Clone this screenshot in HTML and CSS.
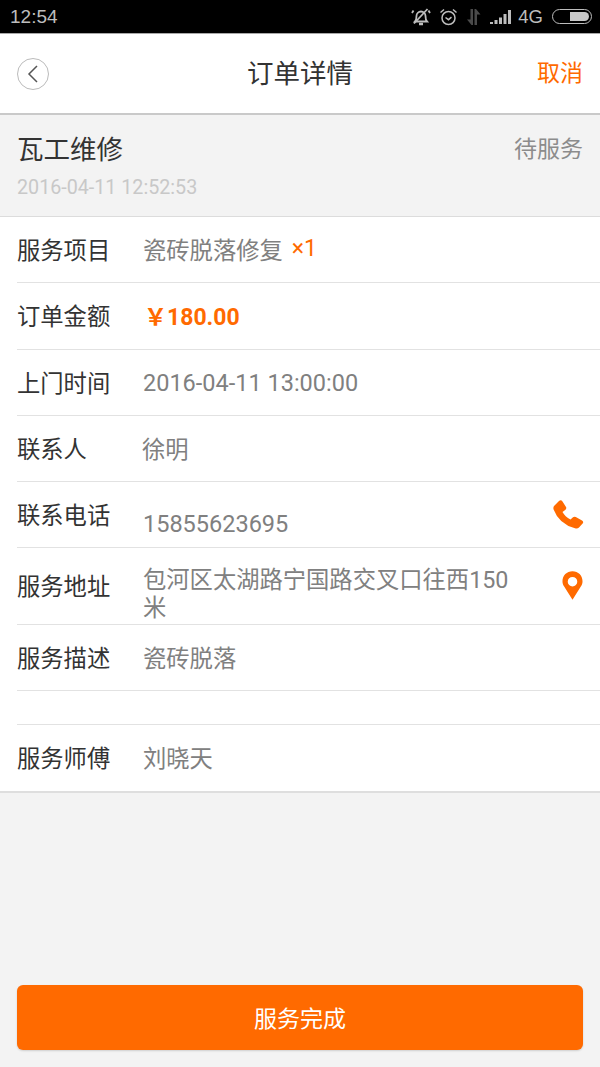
FILE: index.html
```html
<!DOCTYPE html>
<html lang="zh-CN">
<head>
    <meta charset="UTF-8">
    <meta name="viewport" content="width=device-width, initial-scale=1.0">
    <title>订单详情</title>
    <link rel="stylesheet" href="styles.css">
</head>
<body>
    <div class="status-bar">
        <span class="clock">12:54</span>
        <div class="status-icons">
            <svg class="icon-mute" width="20" height="20" viewBox="0 0 20 20" fill="none" stroke="#bdbdbd" stroke-width="1.8">
                <path d="M4 14.500c1.500-1.500 1.500-3 1.500-5.500a4.500 4.500 0 0 1 9 0c0 2.500 0 4 1.500 5.500z"/>
                <path d="M8 17h4" stroke-width="2.500"/>
                <path d="M16.500 2L3 16.500"/>
                <path d="M1 6l1.500-2.500M19 6l-1.500-2.500"/>
            </svg>
            <svg class="icon-alarm" width="19" height="20" viewBox="0 0 19 20" fill="none" stroke="#bdbdbd" stroke-width="1.500">
                <circle cx="9.500" cy="11" r="6.500"/>
                <path d="M6.500 10.500l3 2.200 3-2.500"/>
                <path d="M1.500 5.500l3.500-3M17.500 5.500L14 2.500"/>
            </svg>
            <svg class="icon-data" width="15" height="16" viewBox="0 0 15 16" fill="#4a4a4a">
                <path d="M4.500 0h2.500v16H5.500L1 10.500h3.500z"/>
                <path d="M8.500 0h1.500L14.500 5.500H11V16H8.500z"/>
            </svg>
            <svg class="icon-signal" width="21" height="14" viewBox="0 0 21 14" fill="#bdbdbd">
                <path d="M0 12h3v2H0zM4.500 10h3v4h-3zM9 7.500h3V14H9zM13.500 4h3v10h-3zM18 0h3v14h-3z"/>
            </svg>
            <span class="network">4G</span>
            <div class="battery"><div class="battery-level"></div></div>
        </div>
    </div>

    <header class="top-bar">
        <div class="back-btn">
            <svg width="12" height="18" viewBox="0 0 12 18" fill="none" stroke="#555" stroke-width="1.500">
                <path d="M10 1L2 9l8 8"/>
            </svg>
        </div>
        <h1>订单详情</h1>
        <a class="cancel">取消</a>
    </header>

    <section class="summary">
        <div class="summary-main">
            <h2>瓦工维修</h2>
            <p class="created">2016-04-11 12:52:53</p>
        </div>
        <span class="state">待服务</span>
    </section>

    <section class="details">
        <div class="row">
            <span class="label">服务项目</span>
            <span class="value">瓷砖脱落修复</span>
            <span class="qty">×1</span>
        </div>
        <div class="row row-tall">
            <span class="label">订单金额</span>
            <span class="price">￥180.00</span>
        </div>
        <div class="row">
            <span class="label">上门时间</span>
            <span class="value digits">2016-04-11 13:00:00</span>
        </div>
        <div class="row">
            <span class="label">联系人</span>
            <span class="value contact">徐明</span>
        </div>
        <div class="row row-phone">
            <span class="label">联系电话</span>
            <span class="value digits">15855623695</span>
            <svg class="row-icon" width="31" height="29" viewBox="0 0 31 29" fill="#ff6a00">
                <path d="M1 6L6 1Q8-.5 9.500 1.500L13 7Q13.800 8.500 12.500 9.800L9.500 12Q12 16.500 17.500 19.500L20 17.200Q21.300 16.200 22.800 17L29 20.500Q31 21.800 29.600 23.600L26 27.500Q24.500 29 22 28.300 6 24 .6 9.500 0 7.500 1 6z"/>
            </svg>
        </div>
        <div class="row row-address">
            <span class="label">服务地址</span>
            <span class="value address">包河区太湖路宁国路交叉口往西150米</span>
            <svg class="row-icon pin" width="21" height="29" viewBox="0 0 22 30" fill="#ff6a00">
                <path fill-rule="evenodd" d="M11 0C5 0 .5 4.500.5 10.500c0 2 .6 3.700 1.600 5.300L11 30l8.900-14.200c1-1.600 1.600-3.300 1.600-5.300C21.500 4.500 17 0 11 0zm0 6a5 5 0 1 1 0 10 5 5 0 0 1 0-10z"/>
            </svg>
        </div>
        <div class="row">
            <span class="label">服务描述</span>
            <span class="value">瓷砖脱落</span>
        </div>
        <div class="row row-empty"></div>
        <div class="row">
            <span class="label">服务师傅</span>
            <span class="value">刘晓天</span>
        </div>
    </section>

    <div class="footer">
        <button type="button">服务完成</button>
    </div>
</body>
</html>
```

FILE: styles.css
```css
* {
    box-sizing: border-box;
}
html, body {
    height: 100%;
}
body {
    margin: 0;
    font-family: Roboto, "Noto Sans CJK SC", sans-serif;
    background-color: #f3f3f3;
    display: flex;
    flex-direction: column;
    overflow: hidden;
}
.status-bar {
    height: 34px;
    flex: none;
    background: #000;
    border-bottom: 1px solid #a8a8a8;
    color: #bdbdbd;
    display: flex;
    justify-content: space-between;
    align-items: center;
    padding: 0 8px 0 10px;
}
.clock {
    font-family: "Liberation Sans", sans-serif;
    font-size: 19px;
}
.status-icons {
    display: flex;
    align-items: center;
}
.icon-mute {
    margin-right: 8px;
}
.icon-alarm {
    margin-right: 8px;
}
.icon-data {
    margin-right: 9px;
}
.network {
    font-family: "Liberation Sans", sans-serif;
    font-size: 18.5px;
    margin: 0 9px 0 7px;
}
.battery {
    width: 40px;
    height: 15px;
    border: 1px solid #bdbdbd;
    border-radius: 8px;
    padding: 2px;
    display: flex;
    justify-content: flex-end;
}
.battery-level {
    width: 19px;
    background: #c8c8c8;
    border-radius: 0 5px 5px 0;
}
.top-bar {
    height: 81px;
    flex: none;
    background: #fff;
    border-bottom: 2px solid #c9c9c9;
    display: grid;
    grid-template-columns: 1fr auto 1fr;
    align-items: center;
    padding: 0 17px;
}
.back-btn {
    width: 32px;
    height: 32px;
    border: 1px solid #bbb;
    border-radius: 50%;
    display: flex;
    align-items: center;
    justify-content: center;
}
.top-bar h1 {
    margin: 0 0 5px;
    font-size: 26.5px;
    font-weight: normal;
    color: #333;
}
.cancel {
    justify-self: end;
    font-size: 23px;
    margin-bottom: 5px;
    color: #ff6a00;
}
.summary {
    height: 102px;
    flex: none;
    border-bottom: 1px solid #dcdcdc;
    display: flex;
    justify-content: space-between;
    padding: 17px 17px 0;
}
.summary h2 {
    margin: 0;
    font-size: 26.5px;
    line-height: 36px;
    font-weight: normal;
    color: #333;
}
.created {
    margin: 9px 0 0;
    font-size: 19.7px;
    line-height: 22px;
    color: #c8c8c8;
}
.state {
    font-size: 23px;
    line-height: 36px;
    color: #8c8c8c;
}
.details {
    flex: none;
    background: #fff;
    padding-left: 17px;
    border-bottom: 2px solid #dedede;
}
.row {
    height: 66px;
    border-bottom: 1px solid #e2e2e2;
    display: flex;
    align-items: center;
    padding-bottom: 2px;
    position: relative;
    font-size: 23.3px;
}
.row-tall {
    height: 67px;
}
.details .row:last-child {
    border-bottom: none;
}
.label {
    width: 126px;
    flex: none;
    color: #333;
}
.value {
    color: #808080;
}
.digits {
    font-size: 23.5px;
    padding-top: 3px;
}
.contact {
    margin-left: -1px;
}
.qty {
    color: #ff6a00;
    font-size: 23px;
    margin-left: 9px;
}
.price {
    color: #ff6a00;
    font-size: 23px;
    font-weight: bold;
    margin-left: 1px;
}
.row-phone .digits {
    padding-top: 20px;
}
.row-icon {
    position: absolute;
    right: 16px;
    top: 18px;
}
.row-address {
    height: 77px;
    align-items: flex-start;
    padding: 20px 0 0;
}
.address {
    width: 372px;
    line-height: 28px;
    margin-top: -2px;
}
.pin {
    right: 17px;
    top: 23px;
}
.row-empty {
    height: 34px;
}
.footer {
    flex: 1;
    display: flex;
    align-items: flex-end;
    padding: 0 17px 17px;
}
.footer button {
    width: 100%;
    height: 65px;
    padding-bottom: 3px;
    border: none;
    border-radius: 6px;
    background-color: #ff6a00;
    color: #fff;
    font-family: inherit;
    font-size: 23px;
    box-shadow: 0 1px 2px rgba(0, 0, 0, 0.15);
}
```
